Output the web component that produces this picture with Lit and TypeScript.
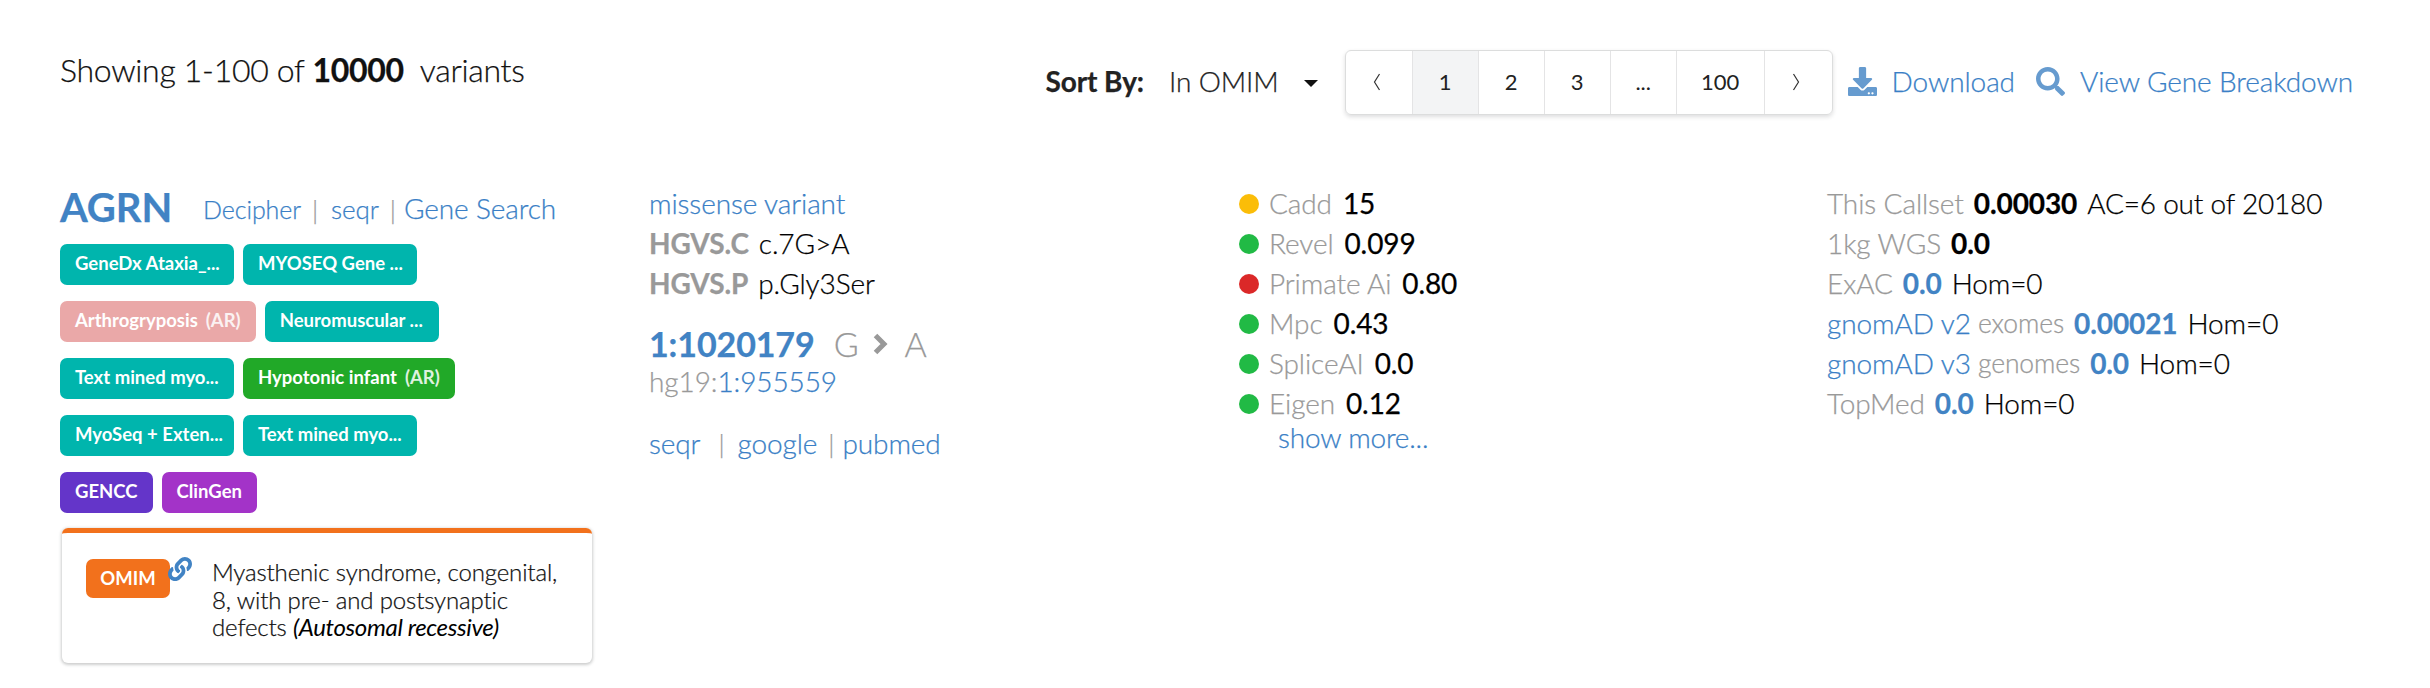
import { LitElement, html, css, svg } from "lit";
import { customElement } from "lit/decorators.js";

const DOWNLOAD = "M216 0h80c13.3 0 24 10.7 24 24v168h87.7c17.8 0 26.7 21.5 14.1 34.1L269.7 378.3c-7.5 7.5-19.8 7.5-27.3 0L90.1 226.1c-12.6-12.6-3.7-34.1 14.1-34.1H192V24c0-13.3 10.7-24 24-24zm296 376v112c0 13.3-10.7 24-24 24H24c-13.3 0-24-10.7-24-24V376c0-13.3 10.7-24 24-24h146.7l49 49c20.1 20.1 52.5 20.1 72.6 0l49-49H488c13.3 0 24 10.7 24 24zm-124 88c0-11-9-20-20-20s-20 9-20 20 9 20 20 20 20-9 20-20zm64 0c0-11-9-20-20-20s-20 9-20 20 9 20 20 20 20-9 20-20z";
const SEARCH = "M505 442.7L405.3 343c-4.5-4.5-10.6-7-17-7H372c27.6-35.3 44-79.7 44-128C416 93.1 322.9 0 208 0S0 93.1 0 208s93.1 208 208 208c48.3 0 92.7-16.4 128-44v16.3c0 6.4 2.5 12.5 7 17l99.7 99.7c9.4 9.4 24.6 9.4 33.9 0l28.3-28.3c9.4-9.4 9.4-24.6.1-34zM208 336c-70.7 0-128-57.2-128-128 0-70.7 57.2-128 128-128 70.7 0 128 57.2 128 128 0 70.7-57.2 128-128 128z";
const LINK = "M326.612 185.391c59.747 59.809 58.927 155.698.36 214.59-.11.12-.24.25-.36.37l-67.2 67.2c-59.27 59.27-155.699 59.262-214.96 0-59.27-59.26-59.27-155.7 0-214.96l37.106-37.106c9.84-9.84 26.786-3.3 27.294 10.606.648 17.722 3.826 35.527 9.69 52.721 1.986 5.822.567 12.262-3.783 16.612l-13.087 13.087c-28.026 28.026-28.905 73.66-1.155 101.96 28.024 28.579 74.086 28.749 102.325.51l67.2-67.19c28.191-28.191 28.073-73.757 0-101.83-3.701-3.694-7.429-6.564-10.341-8.569a16.037 16.037 0 0 1-6.947-12.606c-.396-10.567 3.348-21.456 11.698-29.806l21.054-21.055c5.521-5.521 14.182-6.199 20.584-1.731a152.482 152.482 0 0 1 20.522 17.197zM467.547 44.449c-59.261-59.262-155.69-59.27-214.96 0l-67.2 67.2c-.12.12-.25.25-.36.37-58.566 58.892-59.387 154.781.36 214.59a152.454 152.454 0 0 0 20.521 17.196c6.402 4.468 15.064 3.789 20.584-1.731l21.054-21.055c8.35-8.35 12.094-19.239 11.698-29.806a16.037 16.037 0 0 0-6.947-12.606c-2.912-2.005-6.64-4.875-10.341-8.569-28.073-28.073-28.191-73.639 0-101.83l67.2-67.19c28.239-28.239 74.3-28.069 102.325.51 27.75 28.3 26.872 73.934-1.155 101.96l-13.087 13.087c-4.35 4.35-5.769 10.79-3.783 16.612 5.864 17.194 9.042 34.999 9.69 52.721.509 13.906 17.454 20.446 27.294 10.606l37.106-37.106c59.271-59.259 59.271-155.699.001-214.959z";

const icon = (d: string, box: string) =>
  html`<svg viewBox=${box}>${svg`<path d=${d}></path>`}</svg>`;

type Tag = [string, string, boolean, string?];

@customElement("app-root")
export class AppRoot extends LitElement {
  static styles = css`
    :host {
      display: block;
      width: 2430px;
      height: 688px;
      background: #fff;
      color: #000;
      font-family: "Lato", "Helvetica Neue", Arial, sans-serif;
      font-size: 28px;
      font-weight: 300;
      line-height: 40px;
      letter-spacing: -0.1px;
      -webkit-text-stroke: 0.25px currentColor;
      overflow: hidden;
    }
    a { color: #3a7fc6; text-decoration: none; }
    b { font-weight: 700; }
    .top {
      display: flex;
      align-items: flex-start;
      justify-content: space-between;
      padding: 50px 77px 0 60px;
    }
    .showing { font-size: 32px; line-height: 42px; color: #111; letter-spacing: -0.3px; margin-top: -1px; }
    .tools { display: flex; align-items: center; }
    .sort-label { font-weight: 700; color: #222; margin: 0 25px 4px 0; }
    .sort-value { color: #222; margin-bottom: 4px; }
    .caret {
      width: 0; height: 0;
      margin: 2px 27px 0 25px;
      border-left: 7px solid transparent;
      border-right: 7px solid transparent;
      border-top: 7px solid #111;
    }
    .pager {
      display: flex;
      height: 65px;
      box-sizing: border-box;
      border: 1px solid #dcdddd;
      border-radius: 6px;
      box-shadow: 0 2px 4px rgba(34, 36, 38, 0.15);
      margin-right: 15px;
    }
    .cell {
      width: 66px;
      display: flex;
      align-items: center;
      justify-content: center;
      box-sizing: border-box;
      border-left: 1.5px solid #e4e4e5;
      padding-bottom: 2px;
      font-size: 22px;
      font-weight: 400;
      color: #222;
      -webkit-text-stroke: 0;
    }
    .cell.on { background: #f3f4f5; }
    .cell.wide { width: 88px; }
    .cell.end { border-left: none; }
    .cell.last { width: 68px; }
    .cell svg { width: 8px; height: 20px; margin-right: 4px; fill: none; stroke: #333; stroke-width: 1.2; }
    .tool { display: flex; align-items: center; color: #3a7fc6; gap: 15px; }
    .tool + .tool { margin-left: 21px; }
    .tool span { margin-bottom: 4px; }
    .tool svg { width: 29px; height: 29px; fill: #4183c4; opacity: 0.8; margin-bottom: 3px; }

    .grid {
      display: grid;
      grid-template-columns: repeat(4, 589px);
      padding: 69px 0 0 60px;
    }
    .gene-line { display: flex; align-items: baseline; height: 60px; }
    .gene { font-size: 40px; font-weight: 700; color: #4183c4; line-height: 46px; margin-right: 31px; }
    .gene-links { position: relative; top: -3px; }
    .d-link { font-size: 25px; }
    .s-link { font-size: 26px; }
    .sep { color: #999; font-size: 26px; margin: 0 13px 0 11px; }
    .sep.close { margin-right: 8px; }
    .tags { display: flex; flex-wrap: wrap; gap: 16px 9px; width: 532px; margin-bottom: 16px; -webkit-text-stroke: 0; }
    .tags.last { margin-bottom: 15px; }
    .tag {
      box-sizing: border-box;
      height: 41px;
      padding: 0 15px;
      border-radius: 7px;
      color: #fff;
      font-size: 18.5px;
      font-weight: 700;
      letter-spacing: 0;
      line-height: 39px;
      white-space: nowrap;
    }
    .tag.trunc { width: 174px; }
    .tag i { font-style: normal; opacity: 0.85; margin-left: 8px; }
    .teal { background: #00b5ad; }
    .salmon { background: #eaa8a8; }
    .green { background: #21a928; }
    .purple { background: #6435c9; }
    .violet { background: #a333c8; }
    .card {
      box-sizing: border-box;
      width: 530px;
      height: 135px;
      margin-left: 2px;
      border-top: 5px solid #f2711c;
      border-radius: 6px;
      box-shadow: 0 1px 3px 1px rgba(34, 36, 38, 0.22);
      display: flex;
      padding: 25px 20px 0 24px;
      font-size: 24px;
      line-height: 27.6px;
      letter-spacing: -0.15px;
      color: #111;
    }
    .omim {
      position: relative;
      flex: none;
      width: 84px;
      height: 39px;
      margin: 1px 42px 0 0;
      border-radius: 7px;
      background: #f2711c;
      color: #fff;
      font-size: 18.5px;
      font-weight: 700;
      line-height: 39px;
      letter-spacing: 0;
      text-align: center;
      -webkit-text-stroke: 0;
    }
    .omim svg { position: absolute; left: 82px; top: -2px; width: 24px; height: 24px; fill: #4183c4; }
    .card em { font-style: italic; font-weight: 400; color: #000; letter-spacing: -0.35px; -webkit-text-stroke: 0; }

    .row { display: flex; align-items: center; box-sizing: border-box; height: 40px; padding-bottom: 3px; white-space: pre; }
    .g { color: #999; }
    .gb { color: #999; font-weight: 700; }
    .tight { font-size: 26.5px; }
    .pos-line { display: flex; align-items: baseline; height: 40px; margin-top: 20px; }
    .pos { font-size: 34px; font-weight: 700; color: #4183c4; margin-right: 19px; }
    .big { font-size: 34px; color: #999; }
    .pos-line svg { width: 16px; height: 24px; fill: none; stroke: #999; stroke-width: 5; margin: 0 17px 0 13px; align-self: center; }
    .hg { margin-top: -2px; }
    .hg-links { margin-top: 22px; }
    .first-sep { margin-left: 18px; }
    .dot { flex: none; width: 20px; height: 20px; border-radius: 50%; margin: 3px 10px 0 1px; }
    .more { margin: -6px 0 0 40px; letter-spacing: -0.2px; }
    .val { font-weight: 400; color: #000; margin-left: 11px; }
    .val.strong { font-weight: 700; margin-left: 10px; }
    .blue { color: #4183c4; font-weight: 700; margin-left: 10px; }
    .plain { margin-left: 10px; color: #000; }
    .ac { letter-spacing: -0.2px; }
  `;

  private tags(list: Tag[], cls = "") {
    return html`<div class="tags ${cls}">
      ${list.map(
        ([t, c, tr, extra]) =>
          html`<div class="tag ${c} ${tr ? "trunc" : ""}">${t}${extra ? html`<i>${extra}</i>` : ""}</div>`
      )}
    </div>`;
  }

  render() {
    const preds: [string, string, string][] = [
      ["#fbbd08", "Cadd", "15"],
      ["#21ba45", "Revel", "0.099"],
      ["#db2828", "Primate Ai", "0.80"],
      ["#21ba45", "Mpc", "0.43"],
      ["#21ba45", "SpliceAI", "0.0"],
      ["#21ba45", "Eigen", "0.12"],
    ];
    return html`
      <div class="top">
        <div class="showing">Showing 1-100 of <b>10000</b>&nbsp; variants</div>
        <div class="tools">
          <span class="sort-label">Sort By:</span>
          <span class="sort-value">In OMIM</span>
          <span class="caret"></span>
          <div class="pager">
            <div class="cell end"><svg viewBox="0 0 8 20"><path d="M6.5 2 L1.5 10 L6.5 18"></path></svg></div>
            <div class="cell on">1</div>
            <div class="cell">2</div>
            <div class="cell">3</div>
            <div class="cell">...</div>
            <div class="cell wide">100</div>
            <div class="cell last"><svg viewBox="0 0 8 20"><path d="M1.5 2 L6.5 10 L1.5 18"></path></svg></div>
          </div>
          <div class="tool">${icon(DOWNLOAD, "0 0 512 512")}<span>Download</span></div>
          <div class="tool">${icon(SEARCH, "0 0 512 512")}<span>View Gene Breakdown</span></div>
        </div>
      </div>
      <div class="grid">
        <div>
          <div class="gene-line">
            <span class="gene">AGRN</span>
            <span class="gene-links"><a class="d-link">Decipher</a><span class="sep">|</span><a class="s-link">seqr</a><span class="sep close">|</span><a>Gene Search</a></span>
          </div>
          ${this.tags([
            ["GeneDx Ataxia_...", "teal", true],
            ["MYOSEQ Gene ...", "teal", true],
            ["Arthrogryposis", "salmon", false, "(AR)"],
            ["Neuromuscular ...", "teal", true],
            ["Text mined myo...", "teal", true],
            ["Hypotonic infant", "green", false, "(AR)"],
            ["MyoSeq + Exten...", "teal", true],
            ["Text mined myo...", "teal", true],
          ])}
          ${this.tags([
            ["GENCC", "purple", false],
            ["ClinGen", "violet", false],
          ], "last")}
          <div class="card">
            <div class="omim">OMIM${icon(LINK, "0 0 512 512")}</div>
            <div>
              <div>Myasthenic syndrome, congenital, 8, with pre- and postsynaptic</div>
              <div>defects <em>(Autosomal recessive)</em></div>
            </div>
          </div>
        </div>
        <div>
          <div class="row"><a>missense variant</a></div>
          <div class="row"><span class="gb">HGVS.C</span><span class="plain">c.7G&gt;A</span></div>
          <div class="row"><span class="gb">HGVS.P</span><span class="plain">p.Gly3Ser</span></div>
          <div class="pos-line">
            <a class="pos">1:1020179</a><span class="big">G</span><svg viewBox="0 0 16 24"><path d="M3.5 3.5 L12 12 L3.5 20.5"></path></svg><span class="big">A</span>
          </div>
          <div class="row hg"><span class="g">hg19:</span><a>1:955559</a></div>
          <div class="row hg-links"><a>seqr</a><span class="sep first-sep">|</span><a>google</a><span class="sep close">|</span><a>pubmed</a></div>
        </div>
        <div>
          ${preds.map(
            ([c, k, v]) => html`<div class="row">
              <span class="dot" style="background:${c}"></span><span class="g">${k}</span><span class="val">${v}</span>
            </div>`
          )}
          <div class="row more"><a>show more...</a></div>
        </div>
        <div>
          <div class="row"><span class="g">This Callset</span><span class="val strong">0.00030</span><span class="plain ac">AC=6 out of 20180</span></div>
          <div class="row"><span class="g">1kg WGS</span><span class="val strong">0.0</span></div>
          <div class="row"><span class="g">ExAC</span><span class="blue">0.0</span><span class="plain">Hom=0</span></div>
          <div class="row"><a>gnomAD v2</a><span class="g tight"> exomes</span><span class="blue">0.00021</span><span class="plain">Hom=0</span></div>
          <div class="row"><a>gnomAD v3</a><span class="g tight"> genomes</span><span class="blue">0.0</span><span class="plain">Hom=0</span></div>
          <div class="row"><span class="g">TopMed</span><span class="blue">0.0</span><span class="plain">Hom=0</span></div>
        </div>
      </div>
    `;
  }
}
